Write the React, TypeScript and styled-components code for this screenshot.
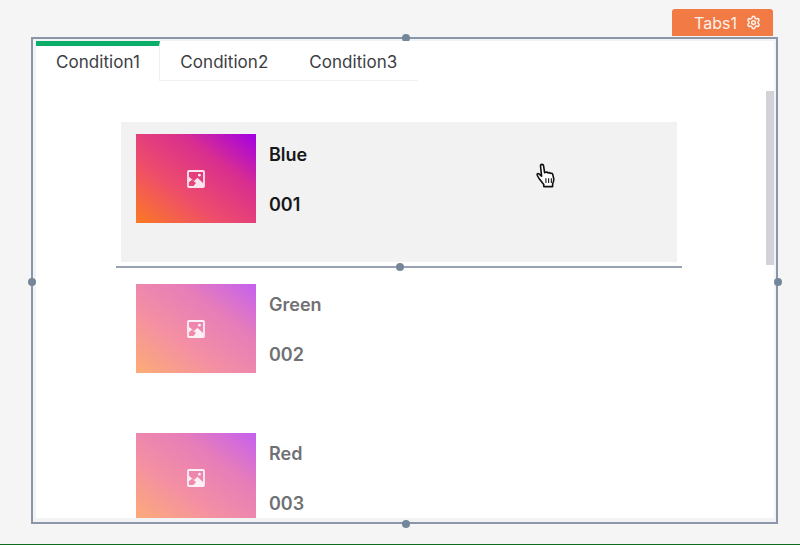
import React from "react";
import styled, { createGlobalStyle } from "styled-components";
import { Settings } from "lucide-react";

const Global = createGlobalStyle`
  html, body { margin: 0; padding: 0; background: #f5f5f5; overflow: hidden; }
  body { font-family: Inter, "Liberation Sans", sans-serif; }
`;

const Page = styled.div`
  width: 800px;
  height: 545px;
  box-sizing: border-box;
  border-bottom: 1px solid #0f6b1e;
  display: flex;
  flex-direction: column;
  padding: 9px 0 0 31px;
`;

const BadgeRow = styled.div`
  width: 742px;
  display: flex;
  justify-content: flex-end;
`;

const Badge = styled.div`
  width: 101px;
  height: 27px;
  box-sizing: border-box;
  padding-left: 22px;
  display: flex;
  align-items: center;
  gap: 9px;
  background: #f27a45;
  border-radius: 3px 3px 0 0;
  color: #fdf0ea;
  font-size: 16px;
`;

const Frame = styled.div`
  position: relative;
  margin-top: 1px;
  width: 747px;
  height: 487px;
  box-sizing: border-box;
  border: 2px solid #8b97a8;
  background: #f1f3f5;
  padding: 2px 2px 4px 3px;
  display: flex;
`;

const Panel = styled.div`
  position: relative;
  flex: 1;
  background: #fff;
  overflow: hidden;
`;

const TabBar = styled.div`
  display: flex;
  width: 382px;
  height: 40px;
  box-sizing: border-box;
  border-bottom: 1px solid #eef0f4;
`;

const Tab = styled.div<{ $active?: boolean }>`
  height: ${(p) => (p.$active ? "40px" : "39px")};
  box-sizing: border-box;
  padding: ${(p) => (p.$active ? "0 19px 4px 20px" : "0 20.500px 3px")};
  display: flex;
  align-items: center;
  font-size: 17px;
  letter-spacing: 0.05px;
  color: #3b3e44;
  background: #fff;
  border-top: 5px solid ${(p) => (p.$active ? "#0bae68" : "transparent")};
  border-right: ${(p) => (p.$active ? "1px solid #eef0f4" : "none")};
`;

const List = styled.div`
  width: 556px;
  margin-left: 85px;
  padding-top: 41px;
  display: flex;
  flex-direction: column;
`;

const Card = styled.div<{ $active?: boolean }>`
  height: 140px;
  box-sizing: border-box;
  padding: 12px 15px;
  display: flex;
  gap: 13px;
  flex-shrink: 0;
  margin-bottom: ${(p) => (p.$active ? "0" : "9px")};
  background: ${(p) => (p.$active ? "#f2f2f2" : "#fff")};
`;

const Thumb = styled.div<{ $active?: boolean }>`
  width: 120px;
  height: 89px;
  flex-shrink: 0;
  display: flex;
  align-items: center;
  justify-content: center;
  background: linear-gradient(to top right, #fb7a22 0%, #ee4c6c 36%, #d92f8e 68%, #a300e6 100%);
  opacity: ${(p) => (p.$active ? 1 : 0.62)};
`;

const ItemText = styled.div<{ $active?: boolean }>`
  display: flex;
  flex-direction: column;
  gap: 30px;
  padding-top: 11px;
  font-size: 18px;
  line-height: 20px;
  font-weight: 600;
  color: ${(p) => (p.$active ? "#17181a" : "#707174")};
`;

const Divider = styled.div`
  position: relative;
  height: 2px;
  margin: 4px -5px 4px;
  flex-shrink: 0;
  background: #98a2b0;
`;

const Scrollbar = styled.div`
  position: absolute;
  top: 50px;
  right: 0;
  width: 8px;
  height: 174px;
  background: #d1d3d8;
`;

const Handle = styled.span`
  position: absolute;
  width: 8px;
  height: 8px;
  border-radius: 50%;
  background: #74869a;
`;

const TopHandle = styled(Handle)`
  top: -5px;
  left: 369px;
`;
const BottomHandle = styled(Handle)`
  bottom: -6px;
  left: 369px;
`;
const LeftHandle = styled(Handle)`
  top: 239px;
  left: -5px;
`;
const RightHandle = styled(Handle)`
  top: 239px;
  right: -6px;
`;
const DividerHandle = styled(Handle)`
  top: -3px;
  left: 280px;
`;

const Pointer = styled.svg`
  position: absolute;
  left: 499px;
  top: 122px;
`;

const ImageIcon = () => (
  <svg width="18" height="18" viewBox="0 0 18 18" fill="none">
    <rect x="1" y="1" width="16" height="16" rx="1" stroke="#fbe6f0" strokeWidth="1.8" />
    <circle cx="12.4" cy="5.2" r="1.4" fill="#fbe6f0" />
    <path d="M1.5 6.5 L7 11 L10.5 7.8 L16.5 13.5 V16.5 H6 L9 13 L5 9.8 L1.5 12.5 Z" fill="#fbe6f0" />
  </svg>
);

const HandCursor = () => (
  <Pointer width="24" height="26" viewBox="0 0 22 24">
    <path
      d="M5 2.5c0-1.6 2.6-1.6 2.8 0l1 6.5 1-.4c.9-.3 1.7 0 2 .6.8-.5 1.8-.3 2.3.4.8-.4 1.8 0 2.1.7l1 4c.3 2-.3 3.700-1 5v2.500H8v-2L3.500 14c-1-1.500-2-3-1.500-3.800.6-.8 1.800-.4 2.700.8L6 12.200Z"
      fill="#fff"
      stroke="#111"
      strokeWidth="1.500"
      strokeLinejoin="round"
    />
    <path d="M10 14v4.500M12.500 14v4.500M15 14v4.500" stroke="#111" strokeWidth="1" />
  </Pointer>
);

const items = [
  { name: "Blue", code: "001", active: true },
  { name: "Green", code: "002", active: false },
  { name: "Red", code: "003", active: false },
];

export default function App() {
  return (
    <Page>
      <Global />
      <BadgeRow>
        <Badge>
          Tabs1 <Settings size={15} strokeWidth={2.4} />
        </Badge>
      </BadgeRow>
      <Frame>
        <TopHandle />
        <BottomHandle />
        <LeftHandle />
        <RightHandle />
        <Panel>
          <TabBar>
            <Tab $active>Condition1</Tab>
            <Tab>Condition2</Tab>
            <Tab>Condition3</Tab>
          </TabBar>
          <List>
            {items.map((item) => (
              <React.Fragment key={item.code}>
                <Card $active={item.active}>
                  <Thumb $active={item.active}>
                    <ImageIcon />
                  </Thumb>
                  <ItemText $active={item.active}>
                    <span>{item.name}</span>
                    <span>{item.code}</span>
                  </ItemText>
                </Card>
                {item.active && (
                  <Divider>
                    <DividerHandle />
                  </Divider>
                )}
              </React.Fragment>
            ))}
          </List>
          <Scrollbar />
          <HandCursor />
        </Panel>
      </Frame>
    </Page>
  );
}
